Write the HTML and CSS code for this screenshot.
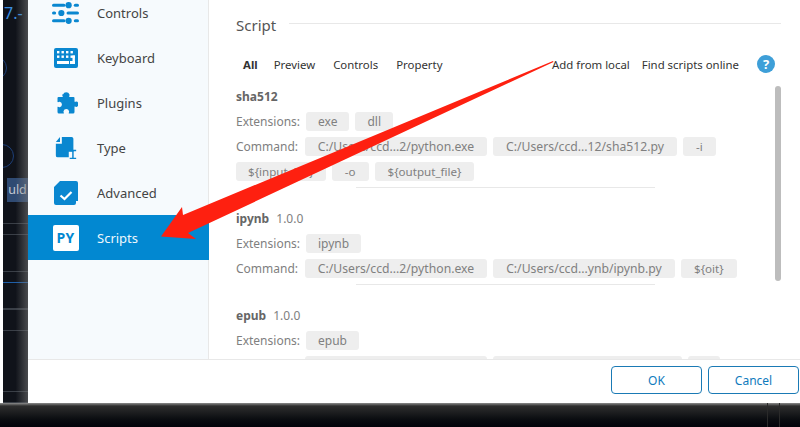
FILE: index.html
```html
<!DOCTYPE html>
<html lang="en">
<head>
<meta charset="utf-8">
<title>Script settings</title>
<link rel="stylesheet" href="styles.css">
</head>
<body>
<div class="page">
  <div class="top">
    <div class="edge"></div>
    <div class="strip">
      <span class="strip-num">7.-</span>
      <span class="strip-circle c1"></span>
      <span class="strip-circle c2"></span>
      <span class="strip-sel">uld</span>
      <span class="strip-line l1"></span>
      <span class="strip-line l2"></span>
      <span class="strip-line l3"></span>
      <span class="strip-line l4"></span>
      <span class="strip-line l5"></span>
      <span class="strip-line l6"></span>
      <span class="strip-line l7"></span>
      <span class="strip-line l8"></span>
      <span class="strip-shade"></span>
    </div>
    <div class="dialog">
      <div class="body">
        <nav class="side">
          <a class="nav-item">
            <svg class="ico ico-controls" viewBox="0 0 26 22"><g fill="#0a87d0"><rect x="0" y="2" width="13" height="3" rx="1.5"/><circle cx="16" cy="3.5" r="3"/><rect x="21" y="2" width="5" height="3" rx="1.5"/><rect x="0" y="9.5" width="4" height="3" rx="1.5"/><circle cx="9" cy="11" r="3"/><rect x="14" y="9.5" width="12" height="3" rx="1.5"/><rect x="0" y="17" width="13" height="3" rx="1.5"/><circle cx="16" cy="18.5" r="3"/><rect x="21" y="17" width="5" height="3" rx="1.5"/></g></svg>
            <span>Controls</span>
          </a>
          <a class="nav-item">
            <svg class="ico" viewBox="0 0 24 24"><rect y="2" width="24" height="20" rx="2" fill="#0a87d0"/><g fill="#fff"><rect x="3" y="5" width="2.4" height="2.4"/><rect x="7.500" y="5" width="2.4" height="2.4"/><rect x="12" y="5" width="2.4" height="2.4"/><rect x="16.500" y="5" width="2.4" height="2.4"/><rect x="3" y="9.500" width="2.4" height="2.4"/><rect x="7.500" y="9.500" width="2.4" height="2.4"/><rect x="12" y="9.500" width="2.4" height="2.4"/><rect x="16.500" y="9.500" width="4.500" height="2.400"/><rect x="18.500" y="9.500" width="2.400" height="8"/><rect x="3" y="15" width="12" height="3"/><rect x="16" y="15" width="5" height="3"/></g></svg>
            <span>Keyboard</span>
          </a>
          <a class="nav-item">
            <svg class="ico" viewBox="0 0 24 24"><path fill="#0a87d0" d="M9 3.500a3.500 3.500 0 0 1 6.500 0c.3 1-.5 1.800-.3 2.500h4.300a1 1 0 0 1 1 1v3.700c.8.300 1.600-.3 2-.2a2.800 2.800 0 0 1 0 5.400c-.5.100-1.300-.5-2-.2V21a1.500 1.500 0 0 1-1.500 1.500h-4.200c-.3-.8.500-1.300.3-2.300a2.900 2.900 0 0 0-5.600 0c-.2 1 .6 1.500.3 2.300H5a1.500 1.500 0 0 1-1.500-1.500v-5c.8-.5 1.500.5 2.300.3a2.900 2.900 0 0 0 0-5.600c-.8-.2-1.500.8-2.300.3V7a1 1 0 0 1 1-1h4.200c.3-.7-.4-1.500-.7-2.500Z"/></svg>
            <span>Plugins</span>
          </a>
          <a class="nav-item">
            <svg class="ico" viewBox="0 0 24 26"><path fill="#0a87d0" d="M7.500 1H18a2 2 0 0 1 2 2v14h-5v6H3a2 2 0 0 1-2-2V8.500h6.500Z"/><path fill="#0a87d0" d="M1 6.500 5.500 1v5.500Z"/><path fill="#0a87d0" d="M16 15h7v1.500h-2.700v7H23V25h-7v-1.500h2.700v-7H16Z"/></svg>
            <span>Type</span>
          </a>
          <a class="nav-item">
            <svg class="ico" viewBox="0 0 24 24"><path fill="#0a87d0" d="M6 0h16a2 2 0 0 1 2 2v18h-2v2a2 2 0 0 1-2 2H2a2 2 0 0 1-2-2V6Z"/><path fill="none" stroke="#fff" stroke-width="2.200" d="m6.500 14.500 4 3.500 7-7"/></svg>
            <span>Advanced</span>
          </a>
          <a class="nav-item active">
            <span class="py">PY</span>
            <span>Scripts</span>
          </a>
        </nav>
        <main class="main">
          <div class="title-row">
            <h1 class="title">Script</h1>
            <span class="title-line"></span>
          </div>
          <div class="tabs">
            <span class="tab tab-on">All</span>
            <span class="tab">Preview</span>
            <span class="tab">Controls</span>
            <span class="tab">Property</span>
            <span class="tab tab-add">Add from local</span>
            <span class="tab">Find scripts online</span>
            <span class="help">?</span>
          </div>
          <section class="script">
            <div class="name"><b>sha512</b></div>
            <div class="line"><span class="label label-ext">Extensions:</span><span class="chip">exe</span><span class="chip">dll</span></div>
            <div class="line"><span class="label">Command:</span><span class="chip chip-path">C:/Users/ccd...2/python.exe</span><span class="chip chip-path chip-long">C:/Users/ccd...12/sha512.py</span><span class="chip chip-var">-i</span></div>
            <div class="line"><span class="chip chip-var chip-tight">${input_file}</span><span class="chip chip-var">-o</span><span class="chip chip-var">${output_file}</span></div>
            <div class="rule"></div>
          </section>
          <section class="script">
            <div class="name"><b>ipynb</b> 1.0.0</div>
            <div class="line"><span class="label label-ext">Extensions:</span><span class="chip">ipynb</span></div>
            <div class="line"><span class="label">Command:</span><span class="chip chip-path">C:/Users/ccd...2/python.exe</span><span class="chip chip-path">C:/Users/ccd...ynb/ipynb.py</span><span class="chip chip-var">${oit}</span></div>
            <div class="rule"></div>
          </section>
          <section class="script">
            <div class="name"><b>epub</b> 1.0.0</div>
            <div class="line"><span class="label label-ext">Extensions:</span><span class="chip">epub</span></div>
            <div class="line"><span class="label"></span><span class="chip chip-path"></span><span class="chip chip-path chip-wide"></span><span class="chip chip-stub"></span></div>
          </section>
          <span class="scrollbar"></span>
        </main>
      </div>
      <footer class="foot">
        <button class="btn">OK</button>
        <button class="btn">Cancel</button>
      </footer>
    </div>
  </div>
  <div class="bottom"><span class="seam s1"></span><span class="seam s2"></span></div>
  <svg class="arrow" viewBox="0 0 800 427"><polygon fill="#fe2010" points="553,61 553.500,62 188,233 196,239 161,236.500 182,207 183,215"/></svg>
</div>
</body>
</html>
```
FILE: styles.css
```css
* { box-sizing: border-box; }
html, body { margin: 0; padding: 0; background: #000; }
body { width: 800px; height: 427px; overflow: hidden; font-family: "Noto Sans", "Open Sans", sans-serif; }
.page { position: relative; width: 800px; height: 427px; display: flex; flex-direction: column; overflow: hidden; }
.top { display: flex; height: 403px; flex: none; }
.edge { width: 3px; background: #fff; }
.strip { position: relative; width: 25px; background: #10131a; overflow: hidden; }
.strip-shade { position: absolute; inset: 0; background: linear-gradient(90deg, rgba(0,0,0,0) 50%, rgba(120,120,120,.55) 100%); }
.strip-num { position: absolute; left: 1px; top: 2px; font-size: 16px; line-height: 22px; color: #3b8fe0; white-space: nowrap; }
.strip-circle { position: absolute; width: 24px; height: 24px; border: 1px solid #1d3f78; border-radius: 50%; }
.c1 { left: -20px; top: 56px; }
.c2 { left: -13px; top: 144px; }
.strip-sel { position: absolute; left: 4px; top: 178px; width: 21px; height: 24px; background: #2f4a72; font-size: 12.5px; line-height: 24px; text-align: center; color: #c5cbd4; white-space: nowrap; }
.strip-line { position: absolute; left: 0; right: 0; height: 1px; background: #3a3f47; }
.l1 { top: 223px; } .l2 { top: 234px; } .l3 { top: 271px; }
.l4 { top: 282px; background: #1f5fa8; } .l5 { top: 308px; height: 2px; } .l6 { top: 330px; } .l7 { top: 391px; } .l8 { top: 402px; }

.dialog { flex: 1; min-width: 0; display: flex; flex-direction: column; background: #fff; }
.body { flex: none; height: 360px; display: flex; border-bottom: 1px solid #e8e8e8; overflow: hidden; }
.side { flex: none; width: 181px; background: #f6fafd; border-right: 1px solid #e8e8e8; display: flex; flex-direction: column; }
.nav-item { flex: none; height: 45px; display: flex; align-items: center; padding-left: 24px; font-size: 13px; color: #444; }
.nav-item:first-child { margin-top: -10px; }
.nav-item > span:last-child { margin-left: 18px; }
.ico { width: 24px; height: 24px; margin: 0 1.5px; flex: none; }
.ico-controls { width: 27px; margin: 0; }
.active { background: #0288d1; color: #eef7fc; margin-right: -1px; }
.py { flex: none; width: 26px; height: 26px; margin: 0 .5px; background: #fff; color: #0288d1; border-radius: 2px; font-size: 14px; font-weight: 700; text-align: center; line-height: 26px; letter-spacing: .3px; }

.main { position: relative; flex: 1; min-width: 0; padding: 14px 0 0 27px; overflow: hidden; }
.title-row { display: flex; align-items: center; height: 22px; padding-right: 19px; }
.title { margin: 0; font-size: 15px; font-weight: 400; color: #555; line-height: 22px; }
.title-line { flex: 1; height: 1px; background: #e8e8e8; margin: -4px 0 0 13px; }
.tabs { display: flex; align-items: center; height: 22px; margin-top: 17px; font-size: 11.4px; color: #333; padding-left: 7px; }
.tab { margin-right: 18px; white-space: nowrap; }
.tab-on { font-weight: 700; margin-right: 16px; }
.tab-add { margin-left: auto; margin-right: 12px; }
.help { flex: none; width: 18px; height: 18px; margin: 0 25px 0 0; border-radius: 50%; background: #3e9fd8; color: #fff; font-size: 13px; font-weight: 700; line-height: 18px; text-align: center; }
.script { font-size: 12px; color: #808080; width: 530px; }
.script + .script { margin-top: 20px; }
.name { height: 22px; margin-top: 11px; line-height: 22px; font-size: 12px; }
.script + .script .name { margin-top: 0; }
.name b { color: #666; margin-right: 4px; }
.line { display: flex; align-items: center; height: 19px; margin-top: 6px; white-space: nowrap; }
.name + .line { margin-top: 4px; }
.label { width: 69px; flex: none; }
.label-ext { width: 70px; }
.chip { flex: none; height: 19px; line-height: 19px; padding: 0 12px; margin-right: 6px; background: #eeeeee; border-radius: 3px; white-space: nowrap; }
.chip-path { width: 182px; padding: 0; text-align: center; font-size: 12.2px; }
.chip-long { width: 184px; }
.chip-wide { width: 189px; }
.chip-stub { width: 32px; }
.chip-var { padding: 0 13px; font-size: 11.6px; }
.chip-tight { padding: 0 12px; }
.rule { height: 1px; background: #e8e8e8; margin: 6px 0 0 120px; width: 299px; }
.scrollbar { position: absolute; left: 566px; top: 86px; width: 6px; height: 195px; background: #bdbdbd; border-radius: 3px; }

.foot { flex: 1; display: flex; justify-content: flex-end; align-items: flex-start; gap: 6px; padding: 6px 1px 0 0; }
.btn { width: 91px; height: 28px; background: #fff; border: 1px solid #1a7ab5; border-radius: 4px; color: #0f7bbd; font: 12px "Noto Sans", "Open Sans", sans-serif; padding: 0; }

.bottom { position: relative; flex: 1; background: linear-gradient(#8c8c8c 0, #2e2e2e 3px, #0b0d11 16px, #02030a 100%); }
.seam { position: absolute; top: 0; bottom: 0; width: 1px; background: #2a2a2a; }
.s1 { left: 767px; } .s2 { left: 779px; }
.arrow { position: absolute; inset: 0; width: 800px; height: 427px; pointer-events: none; }
```
